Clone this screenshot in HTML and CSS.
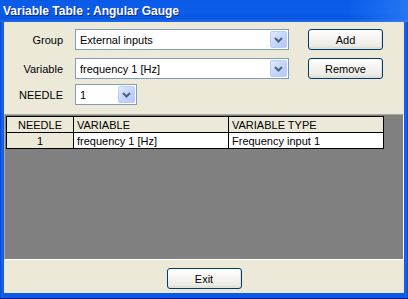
FILE: index.html
```html
<!DOCTYPE html>
<html>
<head>
<meta charset="utf-8">
<link rel="stylesheet" href="styles.css">
</head>
<body>
<div class="window">
  <div class="titlebar">Variable Table : Angular Gauge</div>
  <div class="client">
    <div class="form">
      <div class="row">
        <span class="label">Group</span>
        <div class="combo wide"><span class="value">External inputs</span><span class="drop"><svg width="9" height="6" viewBox="0 0 9 6"><path d="M1 1 L4.5 4.5 L8 1" fill="none" stroke="#4d6185" stroke-width="2"/></svg></span></div>
        <button class="btn">Add</button>
      </div>
      <div class="row">
        <span class="label">Variable</span>
        <div class="combo wide"><span class="value">frequency 1 [Hz]</span><span class="drop"><svg width="9" height="6" viewBox="0 0 9 6"><path d="M1 1 L4.5 4.5 L8 1" fill="none" stroke="#4d6185" stroke-width="2"/></svg></span></div>
        <button class="btn">Remove</button>
      </div>
      <div class="row">
        <span class="label">NEEDLE</span>
        <div class="combo small"><span class="value">1</span><span class="drop"><svg width="9" height="6" viewBox="0 0 9 6"><path d="M1 1 L4.5 4.5 L8 1" fill="none" stroke="#4d6185" stroke-width="2"/></svg></span></div>
      </div>
    </div>
    <div class="grid">
      <table class="tbl">
        <tr class="head">
          <td class="c1">NEEDLE</td>
          <td class="c2">VARIABLE</td>
          <td class="c3">VARIABLE TYPE</td>
        </tr>
        <tr class="data">
          <td class="c1">1</td>
          <td class="c2">frequency 1 [Hz]</td>
          <td class="c3">Frequency input 1</td>
        </tr>
      </table>
    </div>
    <div class="footer">
      <button class="btn">Exit</button>
    </div>
  </div>
</div>
</body>
</html>
```
FILE: styles.css
```css
* { box-sizing: border-box; }
html, body { margin: 0; padding: 0; }
body {
  width: 408px;
  height: 299px;
  overflow: hidden;
  font-family: "Liberation Sans", Arial, sans-serif;
  font-size: 11px;
  color: #000;
}
.window {
  width: 408px;
  height: 299px;
  display: flex;
  flex-direction: column;
  background: linear-gradient(to right, #0840c8 0px, #1a66f0 2px, #0a5ae8 4px, #0a5ae8 404px, #1a66f0 406px, #0840c8 408px);
  padding: 0 4px 5px 4px;
  border-bottom: 1px solid #00138c;
}
.titlebar {
  height: 22px;
  margin: 0 -4px;
  padding: 3px 0 0 3px;
  color: #fff;
  font-family: "Liberation Sans", Arial, sans-serif;
  font-weight: bold;
  font-size: 12px;
  letter-spacing: 0px;
  line-height: 16px;
  text-shadow: 1px 1px 0 #0a2a90;
  background: linear-gradient(to bottom, #0a5ae8 0%, #0b5ee9 50%, #0a56e0 85%, #1d6cf0 100%);
  background-color: #0a5ae8;
  position: relative;
}
.titlebar::after {
  content: "";
  position: absolute;
  right: 0; top: 0; bottom: 0;
  width: 60px;
  background: linear-gradient(to right, rgba(60,140,255,0), rgba(60,140,255,0.55));
}
.client {
  flex: 1;
  background: #ece9d8;
  display: flex;
  flex-direction: column;
}
.form {
  padding: 7px 0 0 0;
  display: flex;
  flex-direction: column;
  gap: 8px;
}
.row {
  display: flex;
  align-items: center;
  height: 21px;
}
.row:nth-child(2) { margin-bottom: -3px; }
.label {
  width: 59px;
  text-align: right;
  margin-right: 12px;
}
.combo {
  height: 21px;
  background: #fff;
  border: 1px solid #7f9db9;
  display: flex;
  align-items: center;
  justify-content: space-between;
  padding: 1px;
}
.combo.wide { width: 214px; margin-right: 19px; }
.combo.small { width: 62px; }
.combo .value { padding-left: 3px; }
.drop {
  width: 17px;
  height: 17px;
  border: 1px solid #b8cdf7;
  border-radius: 2px;
  background: linear-gradient(135deg, #e2ebfe 0%, #c3d4fb 55%, #b4c8f6 100%);
  display: flex;
  align-items: center;
  justify-content: center;
}
.btn {
  font-family: "Liberation Sans", Arial, sans-serif;
  font-size: 11px;
  color: #000;
  width: 75px;
  height: 21px;
  padding: 0;
  border: 1px solid #003c74;
  border-radius: 3px;
  background: linear-gradient(to bottom, #ffffff 0%, #f6f5f1 40%, #ecebe6 85%, #d6d0c5 100%);
  box-shadow: inset -1px -1px 0 #e3e1d7;
}
.grid {
  margin: 9px 0 0 0;
  height: 146px;
  background: #808080;
  border-top: 1px solid #aca899;
  border-left: 1px solid #aca899;
  border-right: 1px solid #fff;
  border-bottom: 1px solid #fff;
  padding: 1px 0 0 1px;
}
.tbl {
  border-collapse: collapse;
  table-layout: fixed;
  width: 377px;
}
.tbl td {
  height: 16px;
  padding: 0 3px;
  border: 1px solid #000;
  line-height: 14px;
  white-space: nowrap;
  overflow: hidden;
}
.tbl .head td { background: #ece9d8; }
.tbl .data td { background: #fff; }
.tbl .data td.c1 { background: #ece9d8; }
.tbl td.c1 { width: 67px; text-align: center; }
.tbl td.c2 { width: 155px; }
.tbl td.c3 { width: 155px; }
.footer {
  flex: 1;
  display: flex;
  justify-content: center;
  align-items: flex-start;
  padding-top: 8px;
}
```
